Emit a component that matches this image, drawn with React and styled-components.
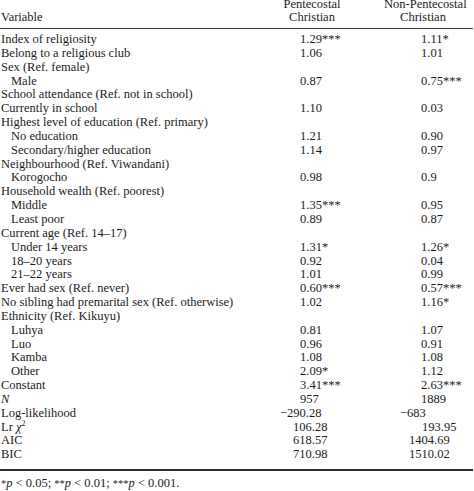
import React from "react";
import styled, { createGlobalStyle } from "styled-components";

const GlobalStyle = createGlobalStyle`
  html, body {
    margin: 0;
    padding: 0;
    background: #fff;
  }
  body {
    width: 474px;
    height: 491px;
    overflow: hidden;
    font-family: "Liberation Serif", "Times New Roman", serif;
    color: #1c1c1c;
  }
`;

const Page = styled.div`
  width: 474px;
  margin-top: -2px;
  margin-left: -1px;
  font-size: 12.5px;
  overflow: hidden;
`;

const Header = styled.div`
  display: grid;
  grid-template-columns: 263px 100px 100px;
  align-items: end;
  line-height: 12.5px;
  padding-bottom: 5px;
  border-bottom: 1.5px solid #3a3a3a;
`;

const HeadLabel = styled.div`
  padding-left: 2px;
`;

const HeadCell = styled.div`
  text-align: center;
  white-space: nowrap;
  &:last-child {
    margin-left: 22px;
  }
`;

const Body = styled.div`
  display: flex;
  flex-direction: column;
  padding: 4px 0 7px;
  border-bottom: 2px solid #2e2e2e;
`;

const Row = styled.div`
  display: grid;
  grid-template-columns: 263px 100px 100px;
  height: 13.85px;
  line-height: 13.85px;
  white-space: nowrap;
`;

const Label = styled.div`
  padding-left: ${(p) => (p.$sub ? "12px" : "2px")};
`;

const Value = styled.div`
  padding-left: ${(p) => 38 + p.$shift}px;
  &:last-child {
    margin-left: 21px;
  }
`;

const Sup = styled.sup`
  font-size: 8px;
  line-height: 0;
  vertical-align: 5px;
`;

const Star = styled.span`
  font-size: 10.5px;
`;

const Footnote = styled.div`
  padding: 5px 0 0 2px;
  line-height: 14px;
  font-size: 12.5px;
`;

const rows = [
  { label: "Index of religiosity", a: "1.29***", b: "1.11*" },
  { label: "Belong to a religious club", a: "1.06", b: "1.01" },
  { label: "Sex (Ref. female)" },
  { label: "Male", sub: true, a: "0.87", b: "0.75***" },
  { label: "School attendance (Ref. not in school)" },
  { label: "Currently in school", a: "1.10", b: "0.03" },
  { label: "Highest level of education (Ref. primary)" },
  { label: "No education", sub: true, a: "1.21", b: "0.90" },
  { label: "Secondary/higher education", sub: true, a: "1.14", b: "0.97" },
  { label: "Neighbourhood (Ref. Viwandani)" },
  { label: "Korogocho", sub: true, a: "0.98", b: "0.9" },
  { label: "Household wealth (Ref. poorest)" },
  { label: "Middle", sub: true, a: "1.35***", b: "0.95" },
  { label: "Least poor", sub: true, a: "0.89", b: "0.87" },
  { label: "Current age (Ref. 14\u201317)" },
  { label: "Under 14 years", sub: true, a: "1.31*", b: "1.26*" },
  { label: "18\u201320 years", sub: true, a: "0.92", b: "0.04" },
  { label: "21\u201322 years", sub: true, a: "1.01", b: "0.99" },
  { label: "Ever had sex (Ref. never)", a: "0.60***", b: "0.57***" },
  { label: "No sibling had premarital sex (Ref. otherwise)", a: "1.02", b: "1.16*" },
  { label: "Ethnicity (Ref. Kikuyu)" },
  { label: "Luhya", sub: true, a: "0.81", b: "1.07" },
  { label: "Luo", sub: true, a: "0.96", b: "0.91" },
  { label: "Kamba", sub: true, a: "1.08", b: "1.08" },
  { label: "Other", sub: true, a: "2.09*", b: "1.12" },
  { label: "Constant", a: "3.41***", b: "2.63***" },
  { label: <i>N</i>, a: "957", b: "1889" },
  { label: "Log-likelihood", a: "\u2212290.28", b: "\u2212683", shiftA: -20, shiftB: -21 },
  {
    label: (
      <>
        Lr <i>&chi;</i>
        <Sup>2</Sup>
      </>
    ),
    a: "106.28",
    b: "193.95",
    shiftA: -7,
    shiftB: 1,
  },
  { label: "AIC", a: "618.57", b: "1404.69", shiftA: -7, shiftB: -12 },
  { label: "BIC", a: "710.98", b: "1510.02", shiftA: -7, shiftB: -12 },
];

export default function App() {
  return (
    <>
      <GlobalStyle />
      <Page>
        <Header>
          <HeadLabel>Variable</HeadLabel>
          <HeadCell>
            Pentecostal
            <br />
            Christian
          </HeadCell>
          <HeadCell>
            Non-Pentecostal
            <br />
            Christian
          </HeadCell>
        </Header>
        <Body>
          {rows.map((r, i) => (
            <Row key={i}>
              <Label $sub={r.sub}>{r.label}</Label>
              <Value $shift={r.shiftA || 0}>{r.a}</Value>
              <Value $shift={r.shiftB || 0}>{r.b}</Value>
            </Row>
          ))}
        </Body>
        <Footnote>
          <Star>*</Star>
          <i>p</i> &lt; 0.05; <Star>**</Star>
          <i>p</i> &lt; 0.01; <Star>***</Star>
          <i>p</i> &lt; 0.001.
        </Footnote>
      </Page>
    </>
  );
}
